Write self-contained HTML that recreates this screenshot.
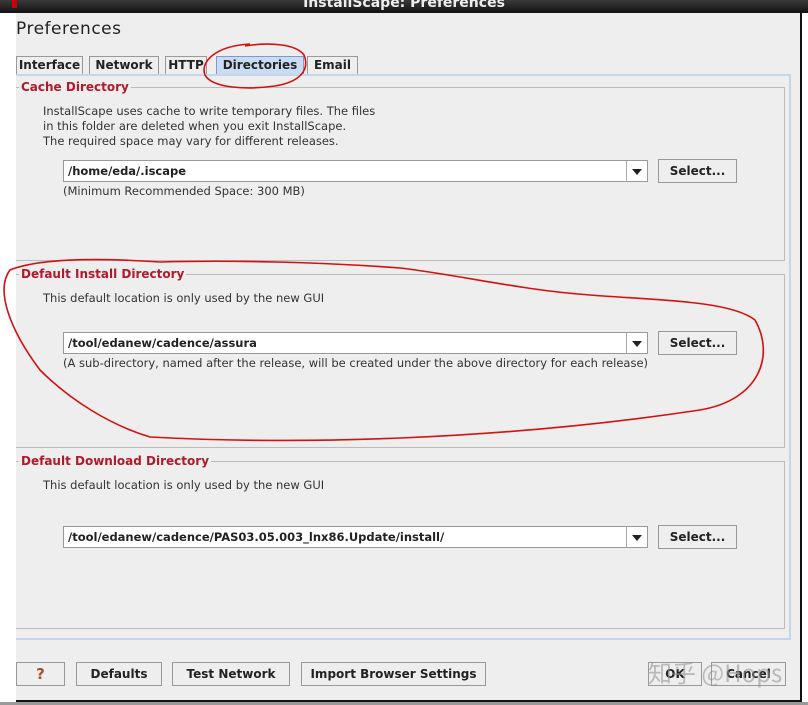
<!DOCTYPE html>
<html><head><meta charset="utf-8"><style>
*{box-sizing:border-box;margin:0;padding:0}
body{width:808px;height:705px;background:#fff;position:relative;overflow:hidden;font-family:"DejaVu Sans","Liberation Sans",sans-serif;font-size:12px;color:#222}
.a{position:absolute}
.win{left:16px;top:13px;width:786px;height:689px;background:#eeeeee;border-right:2px solid #111;border-bottom:2px solid #111}
.tb{left:0;top:0;width:808px;height:13px;background:linear-gradient(#3a3a3a,#111);color:#eee;font-weight:bold;font-size:14px;text-align:center;line-height:6px;overflow:hidden;z-index:3}
.tab{position:absolute;top:56px;height:18px;border:1px solid #999;border-bottom:none;background:#eee;font-weight:bold;font-size:12px;line-height:17px;text-align:center;color:#222}
.grp{position:absolute;left:16px;width:769px;border-top:1px solid #bbb;border-right:1px solid #bbb;border-bottom:1px solid #bbb}
.gt{position:absolute;left:3px;top:-8px;background:#eeeeee;color:#b11a2a;font-weight:bold;font-size:12px;padding:0 2px;line-height:14px}
.t{position:absolute;font-size:11.5px;color:#333;white-space:nowrap}
.cb{position:absolute;left:63px;width:585px;height:22px;background:#fff;border:1px solid #999;font-size:11.5px;font-weight:bold;color:#222;padding-left:4px;line-height:20px}
.cb:after{content:"";position:absolute;right:0;top:0;width:20px;height:20px;border-left:1px solid #aaa;background:#fff}
.cb i{position:absolute;right:5px;top:8px;width:0;height:0;border-left:5px solid transparent;border-right:5px solid transparent;border-top:6px solid #222;z-index:2}
.btn{position:absolute;height:24px;border:1px solid #999;background:#eee;font-weight:bold;font-size:12px;text-align:center;line-height:22px;color:#222}
</style></head><body>
<div class="a win"></div>
<div class="a tb">InstallScape: Preferences</div>
<div class="a" style="left:12px;top:0;width:5px;height:8px;background:#c00;z-index:4"></div>
<div class="a" style="left:16px;top:19px;font-size:17px;color:#222;letter-spacing:.5px">Preferences</div>
<div class="tab" style="left:16px;width:67px">Interface</div>
<div class="tab" style="left:89px;width:70px">Network</div>
<div class="tab" style="left:165px;width:42px">HTTP</div>
<div class="tab" style="left:216px;width:88px;background:#c9dcf3;border-color:#7d9bc4">Directories</div>
<div class="tab" style="left:307px;width:51px">Email</div>
<div class="a" style="left:16px;top:74px;width:775px;height:566px;border:2px solid #c6d6ea;border-left:none"></div>
<div class="grp" style="top:87px;height:174px"><div class="gt">Cache Directory</div></div>
<div class="t" style="left:43px;top:104px">InstallScape uses cache to write temporary files. The files</div>
<div class="t" style="left:43px;top:119px">in this folder are deleted when you exit InstallScape.</div>
<div class="t" style="left:43px;top:134px">The required space may vary for different releases.</div>
<div class="cb" style="top:160px">/home/eda/.iscape<i></i></div>
<div class="btn" style="left:658px;top:159px;width:79px">Select...</div>
<div class="t" style="left:63px;top:184px">(Minimum Recommended Space: 300 MB)</div>
<div class="grp" style="top:274px;height:174px"><div class="gt">Default Install Directory</div></div>
<div class="t" style="left:43px;top:291px">This default location is only used by the new GUI</div>
<div class="cb" style="top:332px">/tool/edanew/cadence/assura<i></i></div>
<div class="btn" style="left:658px;top:331px;width:79px">Select...</div>
<div class="t" style="left:63px;top:356px">(A sub-directory, named after the release, will be created under the above directory for each release)</div>
<div class="grp" style="top:461px;height:168px"><div class="gt">Default Download Directory</div></div>
<div class="t" style="left:43px;top:478px">This default location is only used by the new GUI</div>
<div class="cb" style="top:526px">/tool/edanew/cadence/PAS03.05.003_lnx86.Update/install/<i></i></div>
<div class="btn" style="left:658px;top:525px;width:79px">Select...</div>
<div class="btn" style="left:16px;top:662px;width:49px;color:#a0522d;font-size:15px">?</div>
<div class="btn" style="left:76px;top:662px;width:86px">Defaults</div>
<div class="btn" style="left:172px;top:662px;width:118px">Test Network</div>
<div class="btn" style="left:301px;top:662px;width:185px">Import Browser Settings</div>
<div class="btn" style="left:648px;top:662px;width:54px">OK</div>
<div class="btn" style="left:711px;top:662px;width:75px">Cancel</div>
<div class="a" style="left:0;top:702px;width:808px;height:3px;background:#999"></div>
<div class="a" style="left:648px;top:654px;font-family:'Noto Sans CJK SC','Liberation Sans',sans-serif;font-size:24px;color:rgba(150,150,150,.6);white-space:nowrap">知乎 @Hops</div>
<svg class="a" style="left:0;top:0" width="808" height="705">
<g fill="none" stroke="#d41010" stroke-width="1.6">
<path d="M250 44 C215 46 200 62 205 75 C212 88 245 90 275 86 C300 82 310 70 304 55 C296 44 270 42 245 46"/>
<path d="M160 262 C100 258 40 258 10 270 C-5 290 10 330 40 370 C70 400 110 425 150 437 C300 445 500 440 700 410 C760 400 775 355 755 320 C730 300 650 300 590 295 C520 290 460 275 400 268 C320 262 230 260 160 262"/>
</g></svg>
</body></html>
